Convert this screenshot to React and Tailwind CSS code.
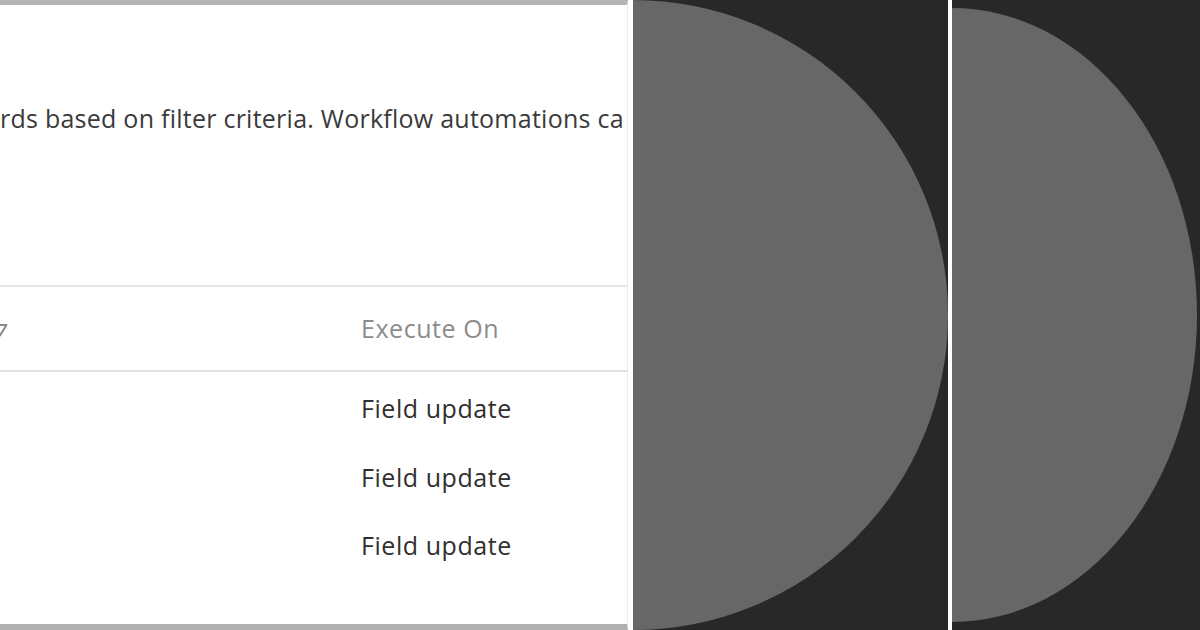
const rows = ["Field update", "Field update", "Field update"];

const HalfDisc = ({ className }) => (
    <div className={`bg-[#676767] rounded-r-[100%_50%] ${className}`} />
);

const App = () => {
    return (
        <div className="flex w-[1200px] h-[630px] overflow-hidden bg-white font-['Open_Sans','Noto_Sans',sans-serif]">
            <div className="w-[633px] shrink-0 bg-white pr-[5px]">
                <div className="h-full flex flex-col border-t-[5px] border-b-[6px] border-r border-t-[#b4b4b4] border-b-[#b0b0b0] border-r-[#ececec] overflow-hidden">
                    <div className="h-[282px] border-b-2 border-[#e6e6e6] pt-[97px]">
                        <p className="whitespace-nowrap text-[25px] leading-[32px] tracking-[0.25px] text-[#3a3a3a]">
                            rds based on filter criteria. Workflow automations ca
                        </p>
                    </div>
                    <div className="h-[85px] flex items-center border-b-2 border-[#e2e2e2]">
                        <div className="w-[361px] flex">
                            <svg width="16" height="14" viewBox="0 0 16 14" className="ml-[-8px] mt-[2px]">
                                <path d="M1.5 2h13L8 12.5z" fill="none" stroke="#8a8a8a" strokeWidth="2" strokeLinejoin="round" />
                            </svg>
                        </div>
                        <span className="text-[25px] tracking-[0.55px] text-[#8c8c8c]">Execute On</span>
                    </div>
                    <div className="flex flex-col pt-[20px]">
                        {rows.map((label, i) => (
                            <div key={i} className="h-[68.5px] flex items-start pl-[361px]">
                                <span className="text-[25px] leading-[32px] tracking-[0.55px] font-medium text-[#2f2f2f]">{label}</span>
                            </div>
                        ))}
                    </div>
                </div>
            </div>
            <div className="w-[315px] shrink-0 bg-[#282828] flex">
                <HalfDisc className="w-[315px] h-[630px]" />
            </div>
            <div className="w-[4px] shrink-0 bg-white" />
            <div className="flex-1 bg-[#282828] flex items-center">
                <HalfDisc className="w-[245px] h-[614px]" />
            </div>
        </div>
    );
};

export default App;
